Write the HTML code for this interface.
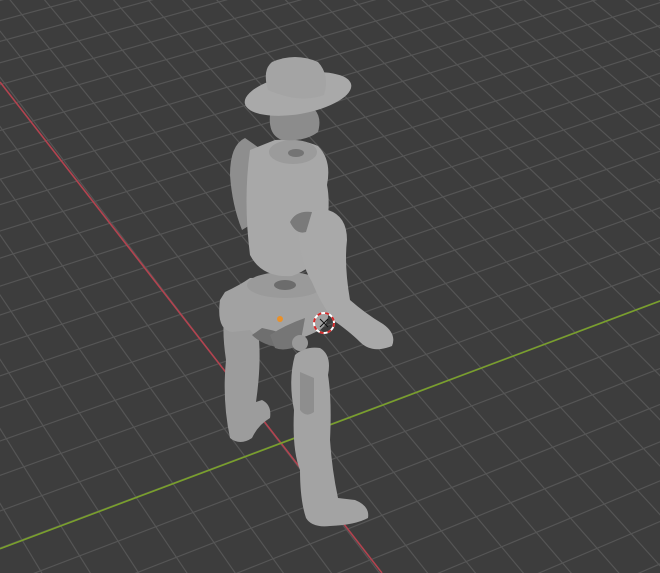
<!DOCTYPE html>
<html><head><meta charset="utf-8"><style>
html,body{margin:0;padding:0;background:#3d3d3d;width:660px;height:573px;overflow:hidden}
svg{display:block;position:absolute;left:0;top:0;overflow:hidden}
</style></head><body>
<svg id="s" width="660" height="573" viewBox="0 0 660 573" xmlns="http://www.w3.org/2000/svg">
<rect width="660" height="573" fill="#3d3d3d"/>
<g id="grid" stroke="#555555" stroke-width="1.2" fill="none"></g>
<line x1="0" y1="82" x2="382" y2="573" stroke="#b3434f" stroke-width="1.6"/>
<line x1="0" y1="548.7" x2="660" y2="301" stroke="#7aa02c" stroke-width="1.6"/>
<g id="fig">
 <path d="M228 300 Q220 320 226 360 Q222 400 230 438 Q240 446 252 438 Q258 425 270 418 Q272 405 262 400 L256 402 Q262 360 258 330 Q262 305 250 295 Z" fill="#9c9c9c"/>
 <path d="M245 138 Q230 145 230 175 Q232 205 242 230 L255 222 Q250 180 262 150 Z" fill="#8e8e8e"/>
 <path d="M220 300 Q216 330 232 332 L250 330 Q262 345 280 345 Q300 340 320 330 Q335 318 322 300 Q330 285 320 276 L250 278 Q240 285 225 292 Z" fill="#a2a2a2"/>
 <path d="M252 335 Q265 348 290 348 L300 340 Q282 332 262 328 Z" fill="#6f6f6f"/>
 <ellipse cx="285" cy="285" rx="38" ry="13" fill="#9a9a9a"/>
 <ellipse cx="285" cy="285" rx="11" ry="5" fill="#6c6c6c"/>
 <path d="M250 150 Q243 200 250 255 Q262 278 292 276 Q315 268 322 248 Q332 210 327 185 Q332 160 318 146 Q300 138 275 140 Z" fill="#a8a8a8"/>
 <ellipse cx="293" cy="152" rx="24" ry="12" fill="#9b9b9b"/>
 <ellipse cx="296" cy="153" rx="8" ry="4" fill="#747474"/>
 <path d="M270 115 Q268 135 282 140 Q305 142 318 132 Q322 118 315 110 Z" fill="#8c8c8c"/>
 <ellipse cx="298" cy="94" rx="54" ry="20" transform="rotate(-10 298 94)" fill="#a9a9a9"/>
 <path d="M268 90 Q262 70 272 62 Q295 52 318 62 Q330 75 324 95 Q300 104 268 90 Z" fill="#a4a4a4"/>
 <path d="M298 220 Q298 260 312 282 Q320 302 333 320 Q350 332 360 342 Q372 354 392 346 Q397 334 383 324 Q366 314 350 300 Q344 265 347 240 Q347 216 328 210 Q308 208 298 220 Z" fill="#a9a9a9"/>
 <path d="M290 222 Q296 210 312 212 L306 232 Q296 235 290 222 Z" fill="#7a7a7a"/>
 <path d="M295 355 Q288 380 294 410 Q292 450 300 470 Q300 500 306 518 Q312 528 330 526 Q355 525 368 518 Q370 506 355 500 L338 498 Q332 470 330 440 Q332 400 328 375 Q332 355 320 348 Q305 346 295 355 Z" fill="#a3a3a3"/>
 <path d="M300 372 L300 410 Q306 418 314 412 L314 378 Z" fill="#8e8e8e"/>
 <path d="M270 335 Q285 325 305 318 L300 345 Q285 352 275 348 Z" fill="#767676"/>
 <circle cx="300" cy="343" r="8" fill="#999"/>
 <circle cx="280" cy="319" r="3" fill="#e8902a"/>
 <circle cx="324" cy="323" r="10" fill="none" stroke="#fff" stroke-width="2"/>
 <circle cx="324" cy="323" r="10" fill="none" stroke="#d12a2a" stroke-width="2" stroke-dasharray="4 4"/>
 <line x1="320" y1="319" x2="328" y2="327" stroke="#111" stroke-width="1"/>
 <line x1="328" y1="319" x2="320" y2="327" stroke="#111" stroke-width="1"/>
</g>
</svg>
<script>
(function(){
var g=document.getElementById('grid'),ns='http://www.w3.org/2000/svg';
var O=[280,443],VA=[-1200,-1490],VB=[5000,-1326];
function line(p,v){
 var dx=p[0]-v[0],dy=p[1]-v[1],L=Math.hypot(dx,dy);dx/=L;dy/=L;
 var l=document.createElementNS(ns,'line');
 l.setAttribute('x1',v[0]);l.setAttribute('y1',v[1]);
 l.setAttribute('x2',p[0]+dx*6000);l.setAttribute('y2',p[1]+dy*6000);
 g.appendChild(l);
}
var NA=135;
for(var k=-120;k<=400;k++){var t=k/(k+NA);line([O[0]+(VB[0]-O[0])*t,O[1]+(VB[1]-O[1])*t],VA);}
var NB=70;
for(var k=-60;k<=300;k++){var t=k/(k+NB);line([O[0]+(VA[0]-O[0])*t,O[1]+(VA[1]-O[1])*t],VB);}
})();
</script>
</body></html>
